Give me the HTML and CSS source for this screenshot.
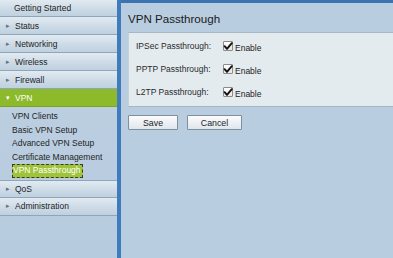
FILE: index.html
```html
<!DOCTYPE html>
<html>
<head>
<meta charset="utf-8">
<link rel="stylesheet" href="styles.css">
</head>
<body>
<div class="page">
  <nav class="sidebar">
    <div class="nav-item nav-top">Getting Started</div>
    <div class="nav-item"><span class="arrow">&#9656;</span>Status</div>
    <div class="nav-item"><span class="arrow">&#9656;</span>Networking</div>
    <div class="nav-item"><span class="arrow">&#9656;</span>Wireless</div>
    <div class="nav-item"><span class="arrow">&#9656;</span>Firewall</div>
    <div class="nav-item nav-active"><span class="arrow">&#9662;</span>VPN</div>
    <div class="sub-list">
      <div class="sub-item">VPN Clients</div>
      <div class="sub-item">Basic VPN Setup</div>
      <div class="sub-item">Advanced VPN Setup</div>
      <div class="sub-item">Certificate Management</div>
      <div class="sub-item"><span class="sub-current">VPN Passthrough</span></div>
    </div>
    <div class="nav-item nav-after"><span class="arrow">&#9656;</span>QoS</div>
    <div class="nav-item"><span class="arrow">&#9656;</span>Administration</div>
  </nav>
  <main class="main">
    <h1 class="title">VPN Passthrough</h1>
    <div class="panel">
      <div class="row">
        <span class="label">IPSec Passthrough:</span>
        <span class="check"><svg viewBox="0 0 10 10" width="10" height="10"><path d="M1.6 5.2 L4 7.8 L8.8 2.2" fill="none" stroke="#111" stroke-width="1.9" stroke-linecap="round" stroke-linejoin="round"/></svg></span>
        <span class="enable">Enable</span>
      </div>
      <div class="row">
        <span class="label">PPTP Passthrough:</span>
        <span class="check"><svg viewBox="0 0 10 10" width="10" height="10"><path d="M1.6 5.2 L4 7.8 L8.8 2.2" fill="none" stroke="#111" stroke-width="1.9" stroke-linecap="round" stroke-linejoin="round"/></svg></span>
        <span class="enable">Enable</span>
      </div>
      <div class="row">
        <span class="label">L2TP Passthrough:</span>
        <span class="check"><svg viewBox="0 0 10 10" width="10" height="10"><path d="M1.6 5.2 L4 7.8 L8.8 2.2" fill="none" stroke="#111" stroke-width="1.9" stroke-linecap="round" stroke-linejoin="round"/></svg></span>
        <span class="enable">Enable</span>
      </div>
    </div>
    <div class="buttons">
      <button class="btn btn-save">Save</button>
      <button class="btn btn-cancel">Cancel</button>
    </div>
  </main>
</div>
</body>
</html>
```

FILE: styles.css
```css
* { box-sizing: border-box; }
html, body {
  margin: 0;
  padding: 0;
  width: 393px;
  height: 258px;
  overflow: hidden;
  background: #b9cde0;
  font-family: "Liberation Sans", Arial, sans-serif;
  font-size: 8.5px;
  color: #1e1e1e;
}
.page {
  display: flex;
  height: 258px;
}
.sidebar {
  width: 121px;
  flex: 0 0 121px;
  border-right: 4px solid #3f7bbd;
  background: linear-gradient(to bottom, #bfd1e2, #b7cbdf);
  display: flex;
  flex-direction: column;
}
.nav-item {
  height: 18px;
  flex: 0 0 18px;
  display: flex;
  align-items: center;
  padding-left: 6px;
  background: linear-gradient(to bottom, #e2eaf1 0%, #cddbe7 55%, #bfd0df 100%);
  border-bottom: 1px solid #8ea6ba;
  color: #1e1e1e;
}
.nav-top {
  height: 17px;
  flex-basis: 17px;
  padding-left: 14px;
}
.arrow {
  font-size: 7px;
  color: #66717c;
  width: 9px;
  display: inline-block;
}
.nav-active {
  background: #8cba2b;
  color: #fff;
  border-bottom: 1px solid #7aa526;
}
.nav-active .arrow {
  color: #fff;
}
.sub-list {
  padding: 3px 0 2px 12px;
  display: flex;
  flex-direction: column;
}
.sub-item {
  height: 13.6px;
  line-height: 13.6px;
  white-space: nowrap;
}
.sub-current {
  display: inline-block;
  line-height: 11.4px;
  background: #9fc33a;
  border: 1px dashed #3a3a2a;
  color: #fff;
  padding: 0 1px 0 0;
}
.nav-after {
  border-top: 1px solid #8ea6ba;
}
.main {
  flex: 1;
  border-top: 3px solid #3b74b1;
  padding: 0 0 0 7px;
  overflow: hidden;
}
.title {
  margin: 0;
  height: 29px;
  display: flex;
  align-items: center;
  font-size: 11.6px;
  font-weight: normal;
  color: #1a1a1a;
  padding-top: 2px;
}
.panel {
  margin-right: -10px;
  background: #e4ebef;
  border-top: 1px solid #a6b7c5;
  border-bottom: 1px solid #a6b7c5;
  border-left: 1px solid #c4d1db;
  padding: 1px 0 2px 7px;
}
.row {
  height: 23.4px;
  display: flex;
  align-items: center;
  color: #2a2a2a;
}
.label {
  width: 87px;
  flex: 0 0 87px;
}
.check {
  width: 10px;
  height: 10px;
  border: 1px solid #8b8b8b;
  border-radius: 1px;
  background: linear-gradient(to bottom, #ffffff, #e6e6e6);
  display: flex;
  align-items: center;
  justify-content: center;
  margin-right: 2px;
}
.check svg {
  display: block;
  flex: 0 0 auto;
}
.enable {
  padding-top: 4px;
  color: #222;
}
.buttons {
  display: flex;
  gap: 9px;
  margin-top: 8px;
}
.btn {
  height: 15px;
  font-family: "Liberation Sans", Arial, sans-serif;
  font-size: 8.8px;
  color: #1e1e1e;
  border: 1px solid #7f8f9c;
  background: linear-gradient(to bottom, #fbfcfd, #dfe6ec);
  padding: 0;
  margin: 0;
  border-radius: 1px;
}
.btn-save { width: 50px; }
.btn-cancel { width: 55px; }
```
